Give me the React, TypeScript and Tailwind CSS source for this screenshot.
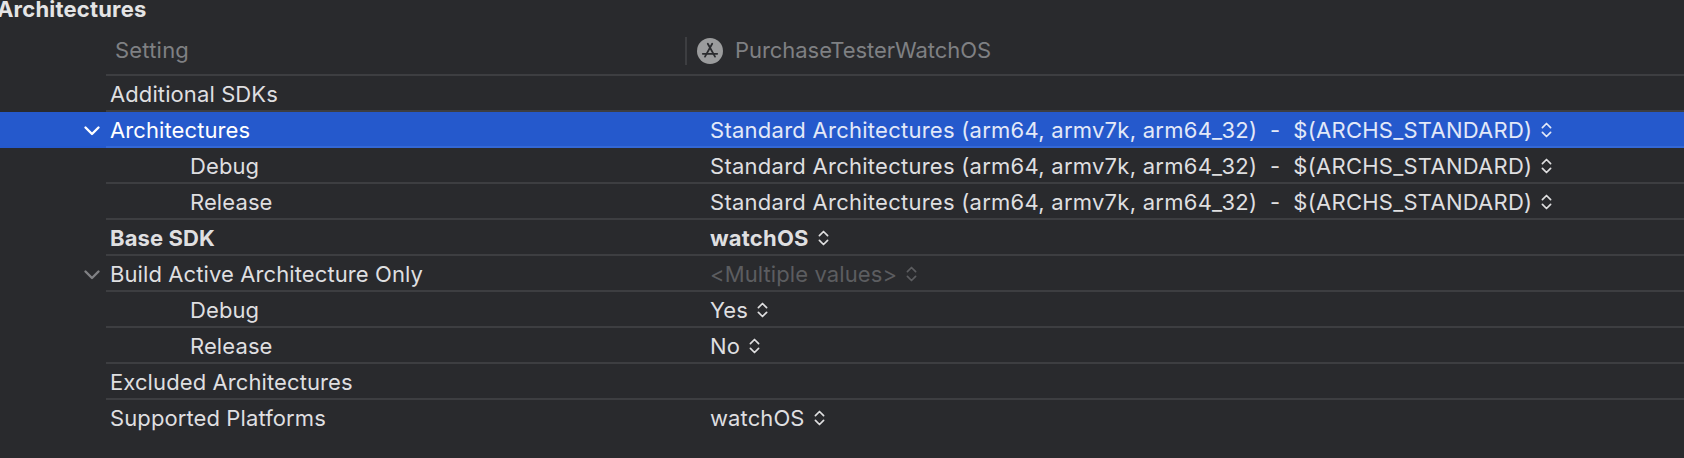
const font = "font-['Inter','Liberation_Sans',sans-serif]";

function Chevron({ color }: { color: string }) {
  return (
    <svg width="18" height="12" viewBox="0 0 18 12" fill="none" stroke={color} strokeWidth="2.4" strokeLinecap="round" strokeLinejoin="round">
      <path d="M2.5 2.5 9 9l6.5-6.5" />
    </svg>
  );
}

function Stepper({ color }: { color: string }) {
  return (
    <svg width="11" height="16" viewBox="0 0 11 16" fill="none" stroke={color} strokeWidth="1.7" strokeLinecap="round" strokeLinejoin="round" className="ml-[9px] shrink-0">
      <path d="M1.4 5.6 5.5 1.5 9.6 5.6" />
      <path d="M1.4 10.4 5.5 14.5 9.6 10.4" />
    </svg>
  );
}

function AppIcon() {
  return (
    <svg width="26" height="26" viewBox="0 0 26 26" fill="none">
      <circle cx="13" cy="13" r="13" fill="#9b9c9d" />
      <g stroke="#2b2c2f" strokeWidth="1.8" strokeLinecap="round">
        <path d="M10.8 5.8 18 18.6" />
        <path d="M15.2 5.8 8 18.6" />
        <path d="M5.8 15.8H20.2" />
      </g>
    </svg>
  );
}

type Row = {
  name: string;
  value?: string;
  sub?: boolean;
  bold?: boolean;
  dim?: boolean;
  chevron?: "white" | "gray";
  selected?: boolean;
};

const STANDARD = "Standard Architectures (arm64, armv7k, arm64_32)  -  $(ARCHS_STANDARD)";

const rows: Row[] = [
  { name: "Additional SDKs" },
  { name: "Architectures", value: STANDARD, chevron: "white", selected: true },
  { name: "Debug", value: STANDARD, sub: true },
  { name: "Release", value: STANDARD, sub: true },
  { name: "Base SDK", value: "watchOS", bold: true },
  { name: "Build Active Architecture Only", value: "<Multiple values>", chevron: "gray", dim: true },
  { name: "Debug", value: "Yes", sub: true },
  { name: "Release", value: "No", sub: true },
  { name: "Excluded Architectures" },
  { name: "Supported Platforms", value: "watchOS" },
];

function SettingRow({ row, last }: { row: Row; last: boolean }) {
  const text = row.selected ? "text-white" : "text-[#dfdfe0]";
  const valueText = row.selected ? "text-[#e3e9f8]" : row.dim ? "text-[#5c5d60]" : "text-[#dfdfe0]";
  const stepper = row.selected ? "#e3e9f8" : row.dim ? "#5c5d60" : "#dfdfe0";
  const border = last ? "border-transparent" : row.selected ? "border-[#3468d6]" : "border-[#3d3e41]";
  const spacing = row.bold
    ? "font-bold tracking-[0.2px]"
    : row.value === STANDARD
      ? "tracking-[0.26px]"
      : "tracking-[0.1px]";
  return (
    <div className={`flex h-9 ${row.selected ? "bg-[#2559cc]" : ""}`}>
      <div className="flex w-[106px] shrink-0 items-center justify-end pr-[5px] pt-0.5">
        {row.chevron && <Chevron color={row.chevron === "white" ? "#ffffff" : "#808184"} />}
      </div>
      <div className={`flex min-w-0 flex-1 items-center border-b-2 pt-0.5 ${border}`}>
        <div className={`w-[604px] shrink-0 whitespace-nowrap tracking-[0.1px] ${row.sub ? "pl-[84px]" : "pl-1"} ${text} ${row.bold ? "font-bold" : ""}`}>
          {row.name}
        </div>
        {row.value && (
          <div className={`flex items-center whitespace-pre ${valueText} ${spacing}`}>
            {row.value}
            <Stepper color={stepper} />
          </div>
        )}
      </div>
    </div>
  );
}

export default function App() {
  return (
    <div className={`h-[458px] w-[1684px] overflow-hidden bg-[#292a2d] text-[22px] ${font}`}>
      <div className="-ml-[3px] h-[20px] text-[22px] leading-[18px] font-bold tracking-[0.2px] whitespace-nowrap text-[#e4e4e5]">
        Architectures
      </div>
      <div className="ml-[106px] flex h-[56px] items-center border-b-2 border-[#3d3e41] pt-[7px] text-[#7f8083]">
        <div className="w-[579px] shrink-0 pl-[9px] tracking-[0.2px]">Setting</div>
        <div className="flex h-7 items-center gap-3 border-l-2 border-[#3d3e41] pl-[10px]">
          <AppIcon />
          <span className="tracking-[-0.05px]">PurchaseTesterWatchOS</span>
        </div>
      </div>
      {rows.map((row, i) => (
        <SettingRow key={i} row={row} last={i === rows.length - 1} />
      ))}
    </div>
  );
}
